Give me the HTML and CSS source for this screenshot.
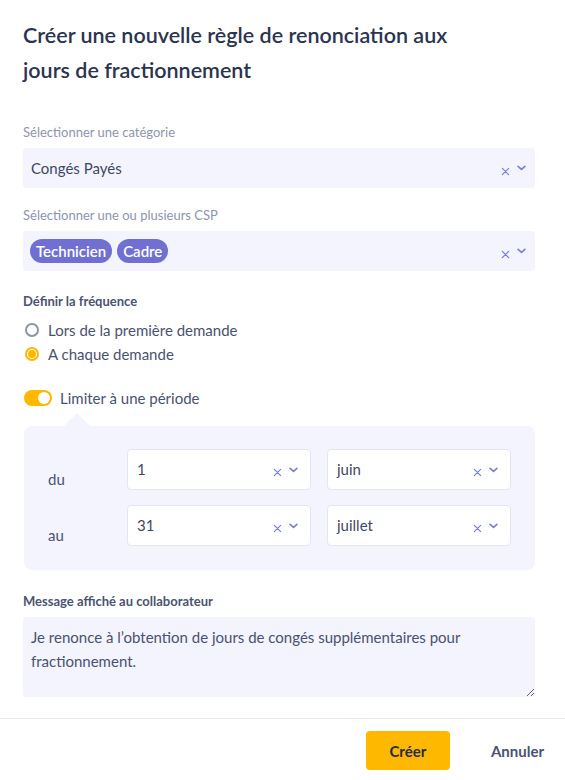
FILE: index.html
```html
<!DOCTYPE html>
<html lang="fr">
<head>
<meta charset="utf-8">
<title>Règle de renonciation</title>
<link rel="stylesheet" href="styles.css">
</head>
<body>
<div class="modal">
  <div class="content">
    <h1 class="title">Créer une nouvelle règle de renonciation aux jours de fractionnement</h1>

    <div class="field-label muted first">Sélectionner une catégorie</div>
    <div class="select">
      <div class="select-value">Congés Payés</div>
      <div class="select-icons">
        <svg class="ic-x" viewBox="0 0 10 10" width="9" height="9"><path d="M1.5 1.5l7 7M8.5 1.5l-7 7" stroke="currentColor" stroke-width="1.4" stroke-linecap="round"/></svg>
        <svg class="ic-chev" viewBox="0 0 10 6" width="9" height="6"><path d="M1.2 1.2L5 4.6l3.8-3.4" fill="none" stroke="currentColor" stroke-width="1.8" stroke-linecap="round" stroke-linejoin="round"/></svg>
      </div>
    </div>

    <div class="field-label muted">Sélectionner une ou plusieurs CSP</div>
    <div class="select multi">
      <div class="tags">
        <span class="tag">Technicien</span>
        <span class="tag">Cadre</span>
      </div>
      <div class="select-icons">
        <svg class="ic-x" viewBox="0 0 10 10" width="9" height="9"><path d="M1.5 1.5l7 7M8.5 1.5l-7 7" stroke="currentColor" stroke-width="1.4" stroke-linecap="round"/></svg>
        <svg class="ic-chev" viewBox="0 0 10 6" width="9" height="6"><path d="M1.2 1.2L5 4.6l3.8-3.4" fill="none" stroke="currentColor" stroke-width="1.8" stroke-linecap="round" stroke-linejoin="round"/></svg>
      </div>
    </div>

    <div class="field-label strong freq">Définir la fréquence</div>
    <div class="radios">
      <label class="radio"><span class="radio-dot"></span><span>Lors de la première demande</span></label>
      <label class="radio checked"><span class="radio-dot"></span><span>A chaque demande</span></label>
    </div>

    <div class="toggle-row">
      <span class="toggle"><span class="knob"></span></span>
      <span>Limiter à une période</span>
    </div>

    <div class="period">
      <div class="period-label">du</div>
      <div class="input-select">
        <span class="select-value">1</span>
        <div class="select-icons">
          <svg class="ic-x" viewBox="0 0 10 10" width="9" height="9"><path d="M1.5 1.5l7 7M8.5 1.5l-7 7" stroke="currentColor" stroke-width="1.4" stroke-linecap="round"/></svg>
          <svg class="ic-chev" viewBox="0 0 10 6" width="9" height="6"><path d="M1.2 1.2L5 4.6l3.8-3.4" fill="none" stroke="currentColor" stroke-width="1.8" stroke-linecap="round" stroke-linejoin="round"/></svg>
        </div>
      </div>
      <div class="input-select">
        <span class="select-value">juin</span>
        <div class="select-icons">
          <svg class="ic-x" viewBox="0 0 10 10" width="9" height="9"><path d="M1.5 1.5l7 7M8.5 1.5l-7 7" stroke="currentColor" stroke-width="1.4" stroke-linecap="round"/></svg>
          <svg class="ic-chev" viewBox="0 0 10 6" width="9" height="6"><path d="M1.2 1.2L5 4.6l3.8-3.4" fill="none" stroke="currentColor" stroke-width="1.8" stroke-linecap="round" stroke-linejoin="round"/></svg>
        </div>
      </div>
      <div class="period-label">au</div>
      <div class="input-select">
        <span class="select-value">31</span>
        <div class="select-icons">
          <svg class="ic-x" viewBox="0 0 10 10" width="9" height="9"><path d="M1.5 1.5l7 7M8.5 1.5l-7 7" stroke="currentColor" stroke-width="1.4" stroke-linecap="round"/></svg>
          <svg class="ic-chev" viewBox="0 0 10 6" width="9" height="6"><path d="M1.2 1.2L5 4.6l3.8-3.4" fill="none" stroke="currentColor" stroke-width="1.8" stroke-linecap="round" stroke-linejoin="round"/></svg>
        </div>
      </div>
      <div class="input-select">
        <span class="select-value">juillet</span>
        <div class="select-icons">
          <svg class="ic-x" viewBox="0 0 10 10" width="9" height="9"><path d="M1.5 1.5l7 7M8.5 1.5l-7 7" stroke="currentColor" stroke-width="1.4" stroke-linecap="round"/></svg>
          <svg class="ic-chev" viewBox="0 0 10 6" width="9" height="6"><path d="M1.2 1.2L5 4.6l3.8-3.4" fill="none" stroke="currentColor" stroke-width="1.8" stroke-linecap="round" stroke-linejoin="round"/></svg>
        </div>
      </div>
    </div>

    <div class="field-label strong msg">Message affiché au collaborateur</div>
    <textarea class="message">Je renonce à l’obtention de jours de congés supplémentaires pour fractionnement.</textarea>
  </div>

  <div class="footer">
    <button class="btn btn-primary">Créer</button>
    <button class="btn btn-link">Annuler</button>
  </div>
</div>
</body>
</html>
```

FILE: styles.css
```css
* { box-sizing: border-box; }

html, body {
  margin: 0;
  padding: 0;
  background: #ffffff;
}

body {
  font-family: "Lato", "Noto Sans", "Liberation Sans", sans-serif;
  color: #454d69;
}

.modal {
  width: 565px;
}

.content {
  padding: 18px 30px 0 23px;
}

.title {
  margin: 0;
  width: 450px;
  font-size: 21.5px;
  line-height: 35px;
  font-weight: 600;
  color: #2b3450;
}

.field-label {
  font-size: 13px;
  line-height: 18px;
}

.field-label.muted {
  color: #8e94ad;
  margin-top: 18px;
}

.field-label.muted.first {
  margin-top: 35px;
}

.field-label.strong {
  font-weight: 700;
  color: #4b5372;
}

.field-label.freq {
  margin-top: 21px;
}

.field-label.msg {
  margin-top: 22px;
}

.select {
  margin-top: 7px;
  height: 40px;
  background: #f3f4fd;
  border-radius: 4px;
  display: flex;
  align-items: center;
  padding: 0 9px 0 8px;
}

.select.multi {
  padding-left: 7px;
}

.select-value {
  flex: 1;
  font-size: 15px;
  color: #3f4863;
}

.select-icons {
  display: flex;
  align-items: center;
  gap: 7px;
  color: #7b7fd6;
  margin-left: auto;
}

.ic-x {
  margin-top: 6px;
}

.ic-chev {
  margin-top: 0px;
}

.tags {
  display: flex;
  gap: 5px;
  flex: 1;
}

.tag {
  display: inline-flex;
  align-items: center;
  height: 24px;
  padding: 0 6px;
  border-radius: 12px;
  background: #6f70d2;
  color: #ffffff;
  font-size: 15px;
  font-weight: 600;
}

.radios {
  margin-top: 8px;
  display: flex;
  flex-direction: column;
}

.radio {
  display: flex;
  align-items: center;
  gap: 9px;
  height: 24px;
  font-size: 15px;
  color: #4a5270;
  padding-left: 2px;
}

.radio-dot {
  width: 14px;
  height: 14px;
  border-radius: 50%;
  border: 2px solid #8d93ab;
  background: #ffffff;
  position: relative;
}

.radio.checked .radio-dot {
  border-color: #ffb800;
}

.radio.checked .radio-dot::after {
  content: "";
  position: absolute;
  left: 1px;
  top: 1px;
  width: 8px;
  height: 8px;
  border-radius: 50%;
  background: #ffb800;
}

.toggle-row {
  margin-top: 20px;
  display: flex;
  align-items: center;
  gap: 8px;
  height: 24px;
  font-size: 15px;
  color: #4a5270;
  padding-left: 1px;
}

.toggle {
  width: 28px;
  height: 16px;
  border-radius: 8px;
  background: #ffb800;
  display: flex;
  align-items: center;
  justify-content: flex-end;
  padding: 0 2px;
}

.knob {
  width: 12px;
  height: 12px;
  border-radius: 50%;
  background: #ffffff;
}

.period {
  position: relative;
  margin-top: 16px;
  margin-left: 1px;
  background: #f3f4fd;
  border-radius: 8px;
  padding: 23px 24px 24px 24px;
  display: grid;
  grid-template-columns: 63px 1fr 1fr;
  column-gap: 16px;
  row-gap: 15px;
}

.period::before {
  content: "";
  position: absolute;
  top: -13px;
  left: 40px;
  border-left: 13px solid transparent;
  border-right: 13px solid transparent;
  border-bottom: 13px solid #f3f4fd;
}

.period-label {
  font-size: 15px;
  color: #4a5270;
  align-self: end;
  line-height: 20px;
  padding-bottom: 1px;
}

.input-select {
  height: 41px;
  background: #ffffff;
  border: 1px solid #e3e5f1;
  border-radius: 4px;
  display: flex;
  align-items: center;
  padding: 0 12px 0 9px;
}

.input-select .select-value {
  margin-top: -2px;
}

.message {
  display: block;
  margin-top: 7px;
  width: 100%;
  height: 80px;
  border: none;
  border-radius: 4px;
  background: #f3f4fd;
  padding: 8px 8px;
  font-family: inherit;
  font-size: 15px;
  line-height: 24px;
  color: #4a5270;
  resize: vertical;
  outline: none;
}

.footer {
  margin-top: 21px;
  border-top: 1px solid #e6e8f2;
  display: flex;
  justify-content: flex-end;
  align-items: center;
  padding: 12px 21px 0 0;
  gap: 41px;
}

.btn {
  font-family: inherit;
  font-size: 15px;
  font-weight: 700;
  border: none;
  cursor: pointer;
}

.btn-primary {
  width: 84px;
  height: 39px;
  border-radius: 4px;
  background: #ffb800;
  color: #262d40;
}

.btn-link {
  background: transparent;
  padding: 0;
  color: #4b5372;
}
```
